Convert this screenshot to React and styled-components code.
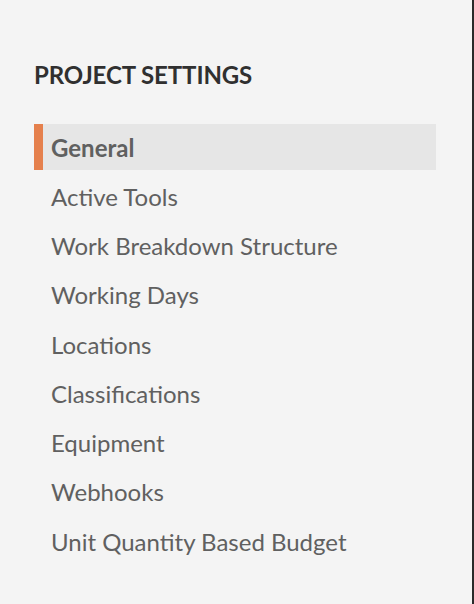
import styled, { createGlobalStyle } from "styled-components";

// Settings side nav: heading plus a list of links, the current one marked by an orange bar.

const GlobalStyle = createGlobalStyle`
  html, body {
    margin: 0;
    padding: 0;
    background: #f4f4f4;
  }
  body {
    font-family: Lato, "Open Sans", "Liberation Sans", sans-serif;
  }
`;

const Panel = styled.aside`
  box-sizing: border-box;
  width: 474px;
  height: 604px;
  background: #f4f4f4;
  border-right: 2px solid #2a2a2a;
  padding: 62px 36px 0 34px;
`;

const Heading = styled.h2`
  margin: 0 0 36px;
  font-size: 24px;
  font-weight: 700;
  line-height: 26px;
  letter-spacing: -0.1px;
  color: #303030;
  text-transform: uppercase;
`;

const NavList = styled.nav`
  display: flex;
  flex-direction: column;
`;

const NavItem = styled.a`
  display: flex;
  align-items: center;
  height: 46px;
  margin-bottom: 3.25px;
  padding-left: 8px;
  font-size: 24px;
  font-weight: ${(p) => (p.$active ? 700 : 400)};
  color: #606060;
  text-decoration: none;
  background: ${(p) => (p.$active ? "#e6e6e6" : "transparent")};
  border-left: 9px solid ${(p) => (p.$active ? "#e5804d" : "transparent")};
`;

const items = [
  "General",
  "Active Tools",
  "Work Breakdown Structure",
  "Working Days",
  "Locations",
  "Classifications",
  "Equipment",
  "Webhooks",
  "Unit Quantity Based Budget",
];

export default function App() {
  return (
    <>
      <GlobalStyle />
      <Panel>
        <Heading>Project Settings</Heading>
        <NavList>
          {items.map((label, i) => (
            <NavItem key={label} href="#" $active={i === 0}>
              {label}
            </NavItem>
          ))}
        </NavList>
      </Panel>
    </>
  );
}
